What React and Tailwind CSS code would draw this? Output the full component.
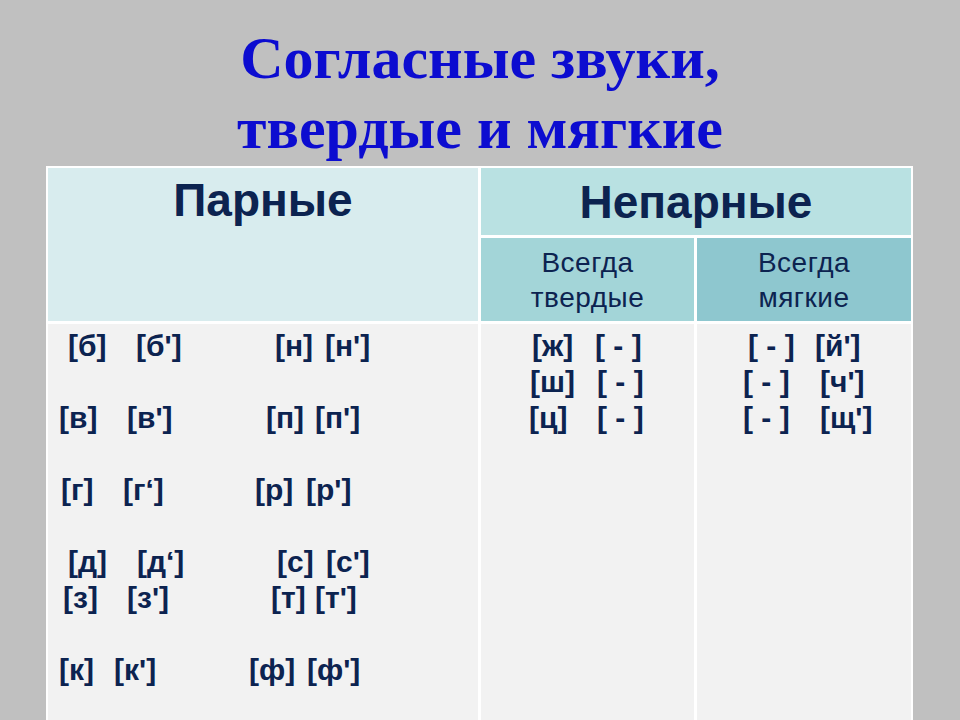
const pairRows = [
  { pl: "pl-[20px]", w1: "w-[68px]", w2: "w-[139px]", w3: "w-[50px]", a: "[б]", b: "[б']", c: "[н]", d: "[н']" },
  null,
  { pl: "pl-[11px]", w1: "w-[68px]", w2: "w-[139px]", w3: "w-[49px]", a: "[в]", b: "[в']", c: "[п]", d: "[п']" },
  null,
  { pl: "pl-[13px]", w1: "w-[62px]", w2: "w-[132px]", w3: "w-[51px]", a: "[г]", b: "[г‘]", c: "[р]", d: "[р']" },
  null,
  { pl: "pl-[20px]", w1: "w-[69px]", w2: "w-[140px]", w3: "w-[49px]", a: "[д]", b: "[д‘]", c: "[с]", d: "[с']" },
  { pl: "pl-[15px]", w1: "w-[64px]", w2: "w-[144px]", w3: "w-[44px]", a: "[з]", b: "[з']", c: "[т]", d: "[т']" },
  null,
  { pl: "pl-[11px]", w1: "w-[55px]", w2: "w-[135px]", w3: "w-[58px]", a: "[к]", b: "[к']", c: "[ф]", d: "[ф']" },
];

const hardRows = [
  { pl: "pl-[51px]", w: "w-[63px]", a: "[ж]", b: "[ - ]" },
  { pl: "pl-[49px]", w: "w-[67px]", a: "[ш]", b: "[ - ]" },
  { pl: "pl-[48px]", w: "w-[68px]", a: "[ц]", b: "[ - ]" },
];

const softRows = [
  { pl: "pl-[51px]", w: "w-[67px]", a: "[ - ]", b: "[й']" },
  { pl: "pl-[46px]", w: "w-[77px]", a: "[ - ]", b: "[ч']" },
  { pl: "pl-[46px]", w: "w-[77px]", a: "[ - ]", b: "[щ']" },
];

export default function App() {
  return (
    <div className="h-[720px] w-[960px] overflow-hidden bg-[#c0c0c0]">
      <h1 className="pt-[23px] text-center font-['Liberation_Serif',serif] text-[60px] font-bold leading-[70px] text-[#0c0cd0]">
        Согласные звуки,
        <br />
        твердые и мягкие
      </h1>

      <div className="mt-[3px] ml-[46px] grid w-[867px] grid-cols-[430px_213px_214px] grid-rows-[67px_83px_420px] gap-[3px] bg-white p-[2px] font-['Liberation_Sans',Arial,sans-serif] text-[#0c2350]">
        <div className="row-span-2 bg-[#d8ecee] pt-[9px] text-center text-[46px] font-bold leading-none">
          Парные
        </div>
        <div className="col-span-2 flex items-center justify-center bg-[#b9e1e2] text-[46px] font-bold leading-none">
          Непарные
        </div>
        <div className="flex flex-col items-center justify-center bg-[#a3d5d8] text-[28px] leading-[35px] tracking-[0.5px]">
          <span>Всегда</span>
          <span>твердые</span>
        </div>
        <div className="flex flex-col items-center justify-center bg-[#8ec7cf] text-[28px] leading-[35px] tracking-[0.5px]">
          <span>Всегда</span>
          <span>мягкие</span>
        </div>

        <div className="bg-[#f2f2f2] pt-[4px] text-[30px] font-bold leading-[36px]">
          {pairRows.map((r, i) =>
            r ? (
              <div key={i} className={`flex whitespace-pre ${r.pl}`}>
                <span className={`shrink-0 ${r.w1}`}>{r.a}</span>
                <span className={`shrink-0 ${r.w2}`}>{r.b}</span>
                <span className={`shrink-0 ${r.w3}`}>{r.c}</span>
                <span>{r.d}</span>
              </div>
            ) : (
              <div key={i} className="h-[36px]" />
            )
          )}
        </div>
        <div className="bg-[#f2f2f2] pt-[4px] text-[30px] font-bold leading-[36px]">
          {hardRows.map((r, i) => (
            <div key={i} className={`flex whitespace-pre ${r.pl}`}>
              <span className={`shrink-0 ${r.w}`}>{r.a}</span>
              <span>{r.b}</span>
            </div>
          ))}
        </div>
        <div className="bg-[#f2f2f2] pt-[4px] text-[30px] font-bold leading-[36px]">
          {softRows.map((r, i) => (
            <div key={i} className={`flex whitespace-pre ${r.pl}`}>
              <span className={`shrink-0 ${r.w}`}>{r.a}</span>
              <span>{r.b}</span>
            </div>
          ))}
        </div>
      </div>
    </div>
  );
}
